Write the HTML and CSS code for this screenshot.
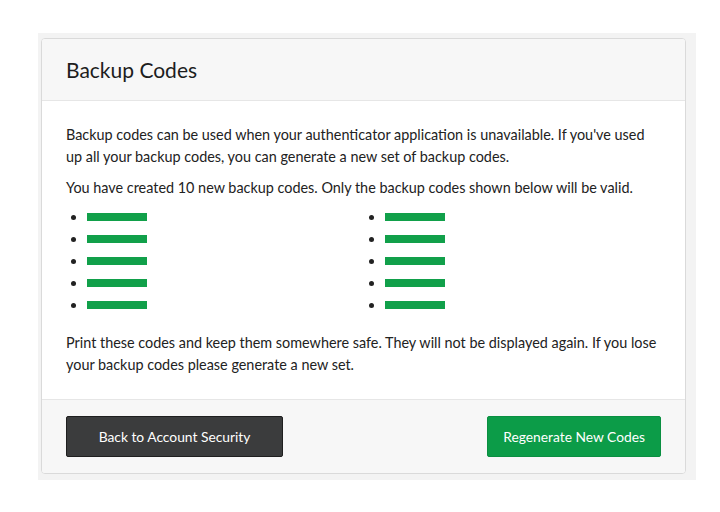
FILE: index.html
```html
<!DOCTYPE html>
<html lang="en">

<head>
    <meta charset="UTF-8">
    <meta name="viewport" content="width=device-width, initial-scale=1.0">
    <title>Backup Codes</title>
    <link rel="stylesheet" href="styles.css">
</head>

<body>
    <div class="page">
        <section class="card">
            <header class="card-header">
                <h1>Backup Codes</h1>
            </header>
            <div class="card-body">
                <p>Backup codes can be used when your authenticator application is unavailable. If you've used
                    up all your backup codes, you can generate a new set of backup codes.</p>
                <p class="intro">You have created 10 new backup codes. Only the backup codes shown below will be valid.</p>
                <ul class="codes">
                    <li><span class="code"></span></li>
                    <li><span class="code"></span></li>
                    <li><span class="code"></span></li>
                    <li><span class="code"></span></li>
                    <li><span class="code"></span></li>
                    <li><span class="code"></span></li>
                    <li><span class="code"></span></li>
                    <li><span class="code"></span></li>
                    <li><span class="code"></span></li>
                    <li><span class="code"></span></li>
                </ul>
                <p class="note">Print these codes and keep them somewhere safe. They will not be displayed again. If you lose
                    your backup codes please generate a new set.</p>
            </div>
            <footer class="card-footer">
                <a class="btn btn-dark" href="#">Back to Account Security</a>
                <a class="btn btn-green" href="#">Regenerate New Codes</a>
            </footer>
        </section>
    </div>
</body>

</html>
```

FILE: styles.css
```css
body {
    margin: 0;
    font-family: Lato, "Open Sans", sans-serif;
    color: #222;
}

.page {
    width: 658px;
    margin: 33px 0 0 38px;
    padding: 5px 10px 6px 3px;
    box-sizing: border-box;
    background: #f3f3f3;
}

.card {
    background: #fff;
    border: 1px solid #dadada;
    border-radius: 4px;
    overflow: hidden;
}

.card-header {
    height: 61px;
    display: flex;
    align-items: center;
    padding: 0 24px;
    background: #f7f7f7;
    border-bottom: 1px solid #e6e6e6;
}

.card-header h1 {
    margin: 0;
    font-size: 21px;
    font-weight: 400;
    color: #1d1d1d;
}

.card-body {
    padding: 23px 24px 23px;
    font-size: 14.4px;
    line-height: 22px;
}

.card-body p {
    margin: 0 0 9px;
}

.card-body .intro {
    margin-bottom: 7px;
}

.codes {
    display: grid;
    grid-template-columns: 298px 1fr;
    grid-template-rows: repeat(5, 22px);
    grid-auto-flow: column;
    margin: 0 0 16px;
    padding-left: 21px;
}

.codes li {
    display: list-item;
}

.code {
    display: inline-block;
    width: 60px;
    height: 8px;
    background: #11a04a;
    vertical-align: 1px;
}

.card-body .note {
    margin: 0;
}

.card-footer {
    display: flex;
    justify-content: space-between;
    padding: 16px 24px;
    background: #f7f7f7;
    border-top: 1px solid #e6e6e6;
}

.btn {
    display: inline-flex;
    align-items: center;
    height: 41px;
    box-sizing: border-box;
    padding: 0 15px;
    font-size: 13.8px;
    color: #fff;
    text-decoration: none;
    border-radius: 2px;
}

.btn-dark {
    width: 217px;
    justify-content: center;
    background: #3b3c3d;
    border: 1px solid #1f1f1f;
}

.btn-green {
    background: #0c9c48;
    border: 1px solid #0a8f41;
}
```
